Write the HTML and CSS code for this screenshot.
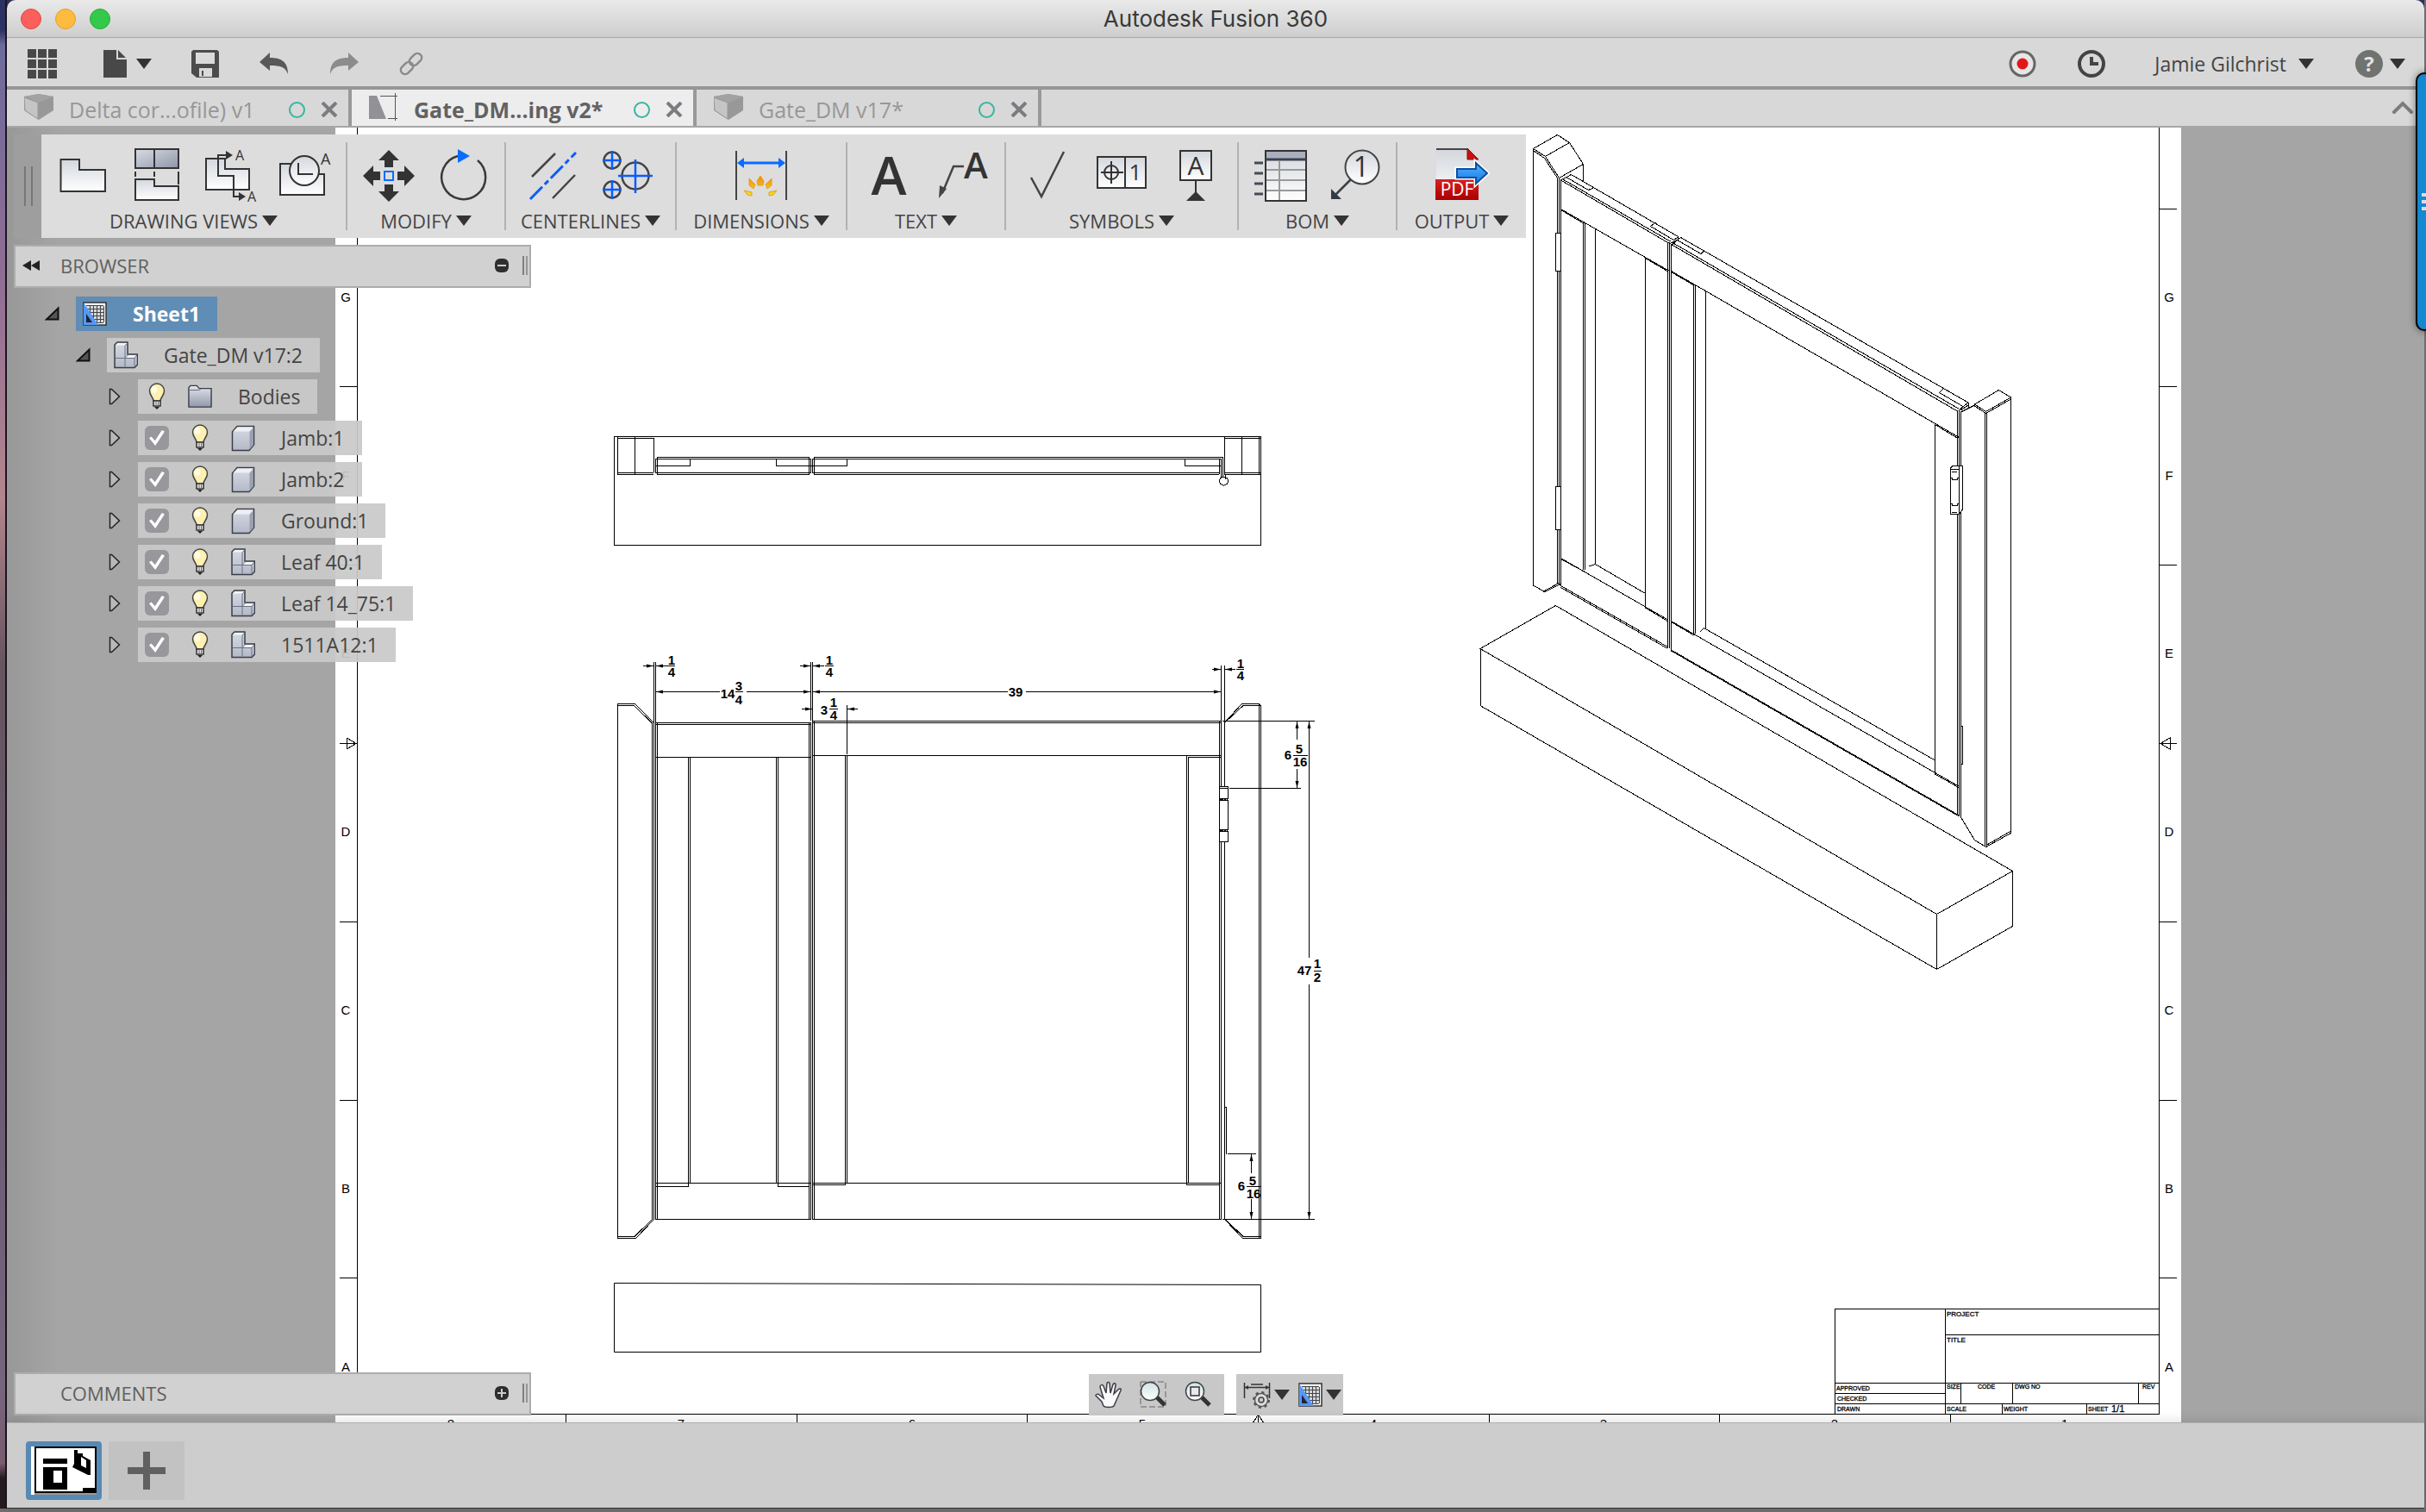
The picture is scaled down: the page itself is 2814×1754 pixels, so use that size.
FILE: index.html
```html
<!DOCTYPE html>
<html lang="en">
<head>
<meta charset="utf-8">
<title>Autodesk Fusion 360</title>
<link rel="stylesheet" href="styles.css">
</head>
<body>
<svg class="defs" aria-hidden="true">
  <defs>
    <linearGradient id="gPaper" x1="0" y1="0" x2="0" y2="1"><stop offset="0" stop-color="#d3d7dd"/><stop offset="1" stop-color="#ffffff"/></linearGradient>
    <linearGradient id="gSteel" x1="0" y1="0" x2="1" y2="1"><stop offset="0" stop-color="#d9dce4"/><stop offset="1" stop-color="#8f95a8"/></linearGradient>
    <linearGradient id="gBlock" x1="0" y1="0" x2="0" y2="1"><stop offset="0" stop-color="#d6dbe4"/><stop offset="1" stop-color="#b4b9c8"/></linearGradient>
    <linearGradient id="gFolder" x1="0" y1="0" x2="0" y2="1"><stop offset="0" stop-color="#e2e6ee"/><stop offset="1" stop-color="#9298ac"/></linearGradient>
    <linearGradient id="gBlue" x1="0" y1="0" x2="0" y2="1"><stop offset="0" stop-color="#55b4ff"/><stop offset="1" stop-color="#1677e6"/></linearGradient>
    <linearGradient id="gRed" x1="0" y1="0" x2="0" y2="1"><stop offset="0" stop-color="#d92020"/><stop offset="1" stop-color="#a80000"/></linearGradient>
    <linearGradient id="gLens" x1="0" y1="0" x2="0" y2="1"><stop offset="0" stop-color="#cfe3e4"/><stop offset="1" stop-color="#ffffff"/></linearGradient>
    <linearGradient id="gFlame" x1="0" y1="0" x2="0" y2="1"><stop offset="0" stop-color="#f08a10"/><stop offset="1" stop-color="#f7e020"/></linearGradient>
    <symbol id="caret" viewBox="0 0 18 12"><path d="M0 0H18L9 12Z" fill="#333"/></symbol>
    <symbol id="tabcube" viewBox="0 0 34 32"><path d="M0 4 17 1 34 4V20L17 31 0 20Z" fill="#989898"/><path d="M0 5 16 11V30L1 20Z" fill="#c3c6c4" stroke="#999"/><path d="M0 4 17 1 34 4 17 11Z" fill="#a2a2a2"/></symbol>
    <symbol id="bulb" viewBox="0 0 28 32"><path d="M10 21C10 17 5.500 15 5.500 9.500A8.500 8.500 0 0 1 22.500 9.500C22.500 15 18 17 18 21Z" fill="#fdf0b0" stroke="#444" stroke-width="1.500"/><ellipse cx="11" cy="8" rx="3.500" ry="4" fill="#fffce8"/><path d="M10 21H18V27H10Z" fill="#e8e8e8" stroke="#333" stroke-width="1.500"/><path d="M13 21V27M15.500 21V27" stroke="#666"/><path d="M11 28H17L14 31Z" fill="#222"/></symbol>
    <symbol id="cube" viewBox="0 0 28 32"><path d="M1.500 9 7 2.500H26.500V24L21 30.500H1.500Z" fill="url(#gBlock)" stroke="#3a3e48" stroke-width="1.500"/><path d="M2.500 8.500 7.500 3.500H25.500L21 8.500Z" fill="#eef0f4"/><path d="M21.500 9 26 4V24L21.500 29.500Z" fill="#9aa0b2"/></symbol>
    <symbol id="comp" viewBox="0 0 28 32"><path d="M1 4 4 1H16V15H27.500V27L24 30.500H1Z" fill="url(#gBlock)" stroke="#3a3e48" stroke-width="1.500"/><path d="M2 19.500H13V29.500M13 19.500V5L16 2M13 19.500 17 15.500M24 19.500 27 16M13 19.500H24V29.500" fill="none" stroke="#6c7282"/><path d="M2 4.500 4.500 2H15L12.500 4.500ZM14 19 17 16H26L23.500 19Z" fill="#f2f4f7"/></symbol>
    <symbol id="sheet" viewBox="0 0 28 28"><path d="M1 1H27V27H1Z" fill="#fff" stroke="#333" stroke-width="1.500"/><path d="M4 5H24V24H4Z" fill="#d4d8e0"/><path d="M4 8.500H24M4 12.500H24M4 16.500H24M4 20.500H24M8.500 5V24M12.500 5V24M16.500 5V24M20.500 5V24M24.500 5V24M4 4.500H24M4 24.500H24" stroke="#444" fill="none"/><path d="M1 1 18 27H1Z" fill="#5598f6"/><path d="M4 14 11 24H4Z" fill="#223"/></symbol>
    <symbol id="open" viewBox="0 0 18 18"><path d="M15.500 2.500V15.500H2Z" fill="#555" stroke="#111" stroke-width="2"/></symbol>
    <symbol id="closed" viewBox="0 0 14 20"><path d="M1.500 1.500H3.500L12.500 10 3.500 18.500H1.500Z" fill="#b8b8b8" stroke="#222" stroke-width="1.500"/></symbol>
    <marker id="arr" viewBox="0 0 8 6" refX="8" refY="3" markerWidth="8" markerHeight="6" markerUnits="userSpaceOnUse" orient="auto-start-reverse"><path d="M8 3 0 1V5Z" fill="#000"/></marker>
  </defs>
</svg>

<div class="backdrop"></div>
<div class="window">
  <header class="titlebar">
    <div class="lights"><button class="light red" aria-label="Close"></button><button class="light amber" aria-label="Minimise"></button><button class="light green" aria-label="Zoom"></button></div>
    <h1>Autodesk Fusion 360</h1>
    <span></span>
  </header>

  <div class="quickbar">
    <button aria-label="Data panel"><svg width="34" height="34" viewBox="0 0 34 34"><path fill="#484848" d="M0 0H10V10H0ZM12 0H22V10H12ZM24 0H34V10H24ZM0 12H10V22H0ZM12 12H22V22H12ZM24 12H34V22H24ZM0 24H10V34H0ZM12 24H22V34H12ZM24 24H34V34H24Z"/></svg></button>
    <button class="with-caret q-file" aria-label="File"><svg width="27" height="32" viewBox="0 0 27 32"><path d="M0 0H15V11H27V32H0ZM17 0 26 9H17Z" fill="#484848"/></svg><svg width="18" height="12"><use href="#caret"/></svg></button>
    <button class="q-save" aria-label="Save"><svg width="32" height="32" viewBox="0 0 32 32"><path d="M2 0H30L32 2V32H6L0 27V2Z" fill="#4c4c4c"/><path d="M5 3H27V16H5ZM9 21H24V31H9Z" fill="#dadada"/><path d="M12 24H14V30H12Z" fill="#4c4c4c"/></svg></button>
    <button class="q-undo" aria-label="Undo"><svg width="34" height="26" viewBox="0 0 34 26"><path d="M0 11 12 0V6C25 6 33 10 33 25C30 17 25 15 12 15V21Z" fill="#585858"/></svg></button>
    <button class="q-undo" aria-label="Redo"><svg width="34" height="26" viewBox="0 0 34 26"><path d="M34 11 22 0V6C9 6 1 10 1 25C4 17 9 15 22 15V21Z" fill="#8c8c8c"/></svg></button>
    <button class="q-undo" aria-label="Link"><svg width="28" height="28" viewBox="0 0 28 28"><g fill="none" stroke="#8a8a8a" stroke-width="2.500"><rect x="-8" y="-5" width="16" height="10" rx="5" transform="translate(19 9) rotate(-45)"/><rect x="-8" y="-5" width="16" height="10" rx="5" transform="translate(9 19) rotate(-45)"/></g></svg></button>
    <span class="push"></span>
    <button aria-label="Record"><svg width="32" height="32" viewBox="0 0 32 32"><circle cx="16" cy="16" r="14" fill="#e6e6e6" stroke="#666" stroke-width="3"/><circle cx="16" cy="16" r="6.500" fill="#e01818"/></svg></button>
    <button class="q-clock" aria-label="Job status"><svg width="32" height="32" viewBox="0 0 32 32"><circle cx="16" cy="16" r="14" fill="none" stroke="#444" stroke-width="4"/><path d="M16 8V16H24" fill="none" stroke="#444" stroke-width="4"/></svg></button>
    <button class="user q-user">Jamie Gilchrist<svg width="18" height="12"><use href="#caret"/></svg></button>
    <button class="with-help q-help" aria-label="Help"><span class="help">?</span><svg width="18" height="12"><use href="#caret"/></svg></button>
  </div>

  <nav class="tabs">
    <div class="tab"><svg width="34" height="32"><use href="#tabcube"/></svg><a href="#">Delta cor...ofile) v1</a><i></i><button aria-label="Close tab"><svg width="20" height="18" viewBox="0 0 20 18"><path d="M2 1 18 17M18 1 2 17" stroke="#7b7b80" stroke-width="4"/></svg></button></div>
    <div class="tab active"><svg width="34" height="32" viewBox="0 0 34 32"><path d="M0 3H9L20 30H0Z" fill="#919196"/><path d="M13 3.500H33M22 29.500H33M30.500 0V32" stroke="#555" fill="none"/></svg><a href="#">Gate_DM...ing v2*</a><i></i><button aria-label="Close tab"><svg width="20" height="18" viewBox="0 0 20 18"><path d="M2 1 18 17M18 1 2 17" stroke="#7b7b80" stroke-width="4"/></svg></button></div>
    <div class="tab"><svg width="34" height="32"><use href="#tabcube"/></svg><a href="#">Gate_DM v17*</a><i></i><button aria-label="Close tab"><svg width="20" height="18" viewBox="0 0 20 18"><path d="M2 1 18 17M18 1 2 17" stroke="#7b7b80" stroke-width="4"/></svg></button></div>
    <button class="fold" aria-label="Collapse"><svg width="26" height="16" viewBox="0 0 26 16"><path d="M3 13 13 3 23 13" fill="none" stroke="#7b7b80" stroke-width="4" stroke-linecap="round"/></svg></button>
  </nav>

  <main class="workspace">
    <svg class="drawing" viewBox="8 148 2804 1502">
      <path d="M389 148H2530V1650H389Z" fill="#fff"/>
      <!-- sheet frame and zone marks -->
      <g class="ln">
        <path d="M414.500 148V1640.500H2504.500V148"/>
        <path d="M394 448.500H414M394 655.500H414M394 1069.500H414M394 1276.500H414M394 1482.500H414"/>
        <path d="M2504 242.500H2525M2504 448.500H2525M2504 655.500H2525M2504 1069.500H2525M2504 1276.500H2525M2504 1482.500H2525"/>
        <path d="M656.500 1640V1650M924.500 1640V1650M1191.500 1640V1650M1727.500 1640V1650M1994.500 1640V1650M2262.500 1640V1650"/>
        <path d="M394 862.500H414M402 856 413 862.500 402 869ZM2504 862.500H2525M2517 856 2506 862.500 2517 869ZM1459.500 1640V1650M1453 1651 1459.500 1641 1466 1651"/>
      </g>
      <g class="zone">
        <text x="401" y="350">G</text><text x="401" y="557">F</text><text x="401" y="763">E</text><text x="401" y="970">D</text><text x="401" y="1177">C</text><text x="401" y="1384">B</text><text x="401" y="1591">A</text>
        <text x="2516" y="350">G</text><text x="2516" y="557">F</text><text x="2516" y="763">E</text><text x="2516" y="970">D</text><text x="2516" y="1177">C</text><text x="2516" y="1384">B</text><text x="2516" y="1591">A</text>
        <text x="523" y="1657">8</text><text x="790" y="1657">7</text><text x="1058" y="1657">6</text><text x="1325" y="1657">5</text><text x="1593" y="1657">4</text><text x="1860" y="1657">3</text><text x="2128" y="1657">2</text><text x="2395" y="1657">1</text>
      </g>
      <!-- plan view -->
      <g class="ln">
        <path d="M712.500 506.500H1462.500V632.500H712.500Z"/>
        <path d="M716.500 506V550.500H758M736.500 506V550M758.500 508V548M716 508.500H758M716 548.500H758"/>
        <path d="M760.500 532V549M762.500 530.500H939M761 532.500H940M760 548.500H940M762 550.500H939M762.500 530V550M938.500 530V550M940.500 532V549M760 540.500H800.500V532M900.500 532V540.500H982.500V532"/>
        <path d="M942.500 532V549M944.500 530V550M944 530.500H1418M943 532.500H1416M943 548.500H1414M944 550.500H1414M1374.500 532V540.500H1416M1414.500 532V550M1416.500 532V554M1418.500 530V554M1421.500 550V556"/>
        <circle cx="1419.500" cy="558" r="5"/>
        <path d="M1420.500 506V550.500H1462M1440.500 506V550M1460.500 506V550M1420 508.500H1462M1420 548.500H1462"/>
      </g>
      <!-- front elevation -->
      <g class="ln">
        <path d="M716.500 1436.500V816.500H736.500L758.500 838.500V1414.500L737.500 1436.500ZM716 818.500H735.500L756.500 839V1414.500L736 1434.500H716"/>
        <path d="M760.500 838V1414.500H940.500V838.500H760M760 840.500H940M762.500 838V1414M938.500 838V1414M760 878.500H940M798.500 878V1376.500H760M800.500 878V1372M900.500 878V1372M902.500 878V1376.500H938M760 1372.500H940"/>
        <path d="M942.500 836.500H1416.500V1414.500H942.500ZM942 838.500H1416M944.500 836V1414M1414.500 836V1414M942 876.500H1416M980.500 876V1374.500H942M982.500 876V1372M942 1372.500H1416M1376.500 876V1374.500H1414M1378.500 1372V878.500H1416"/>
        <path d="M1420.500 1414.500V838L1440.500 816.500H1460.500L1462.500 818.500V1436.500H1441.500L1420.500 1414.500M1421 838 1442 818.500H1462M1460.500 817V1436M1421 1414 1442 1434.500H1462"/>
        <path d="M1422.500 1284.500V1338.500M1420 1284.500H1423"/>
        <path class="solid" d="M1414.500 912.500H1424.500V926.500H1414.500ZM1414.500 928.500H1424.500V962.500H1414.500ZM1414.500 964.500H1424.500V976.500H1414.500ZM1414 914.500H1424"/>
        <path stroke-dasharray="2 1" d="M1414 927.500H1424M1414 963.500H1424"/>
      </g>
      <path class="ln soft" d="M712.500 1488.500 1462.500 1490.500V1568.500H712.500Z"/>
      <!-- dimensions -->
      <g class="ln">
        <path d="M758.500 768V838M760.500 768V838M940.500 768V836M942.500 768V836M1416.500 772V836M1420.500 772V836M982.500 818V875M1418 836.500H1525M1426 914.500H1509M1418 1414.500H1525M1424 1338.500H1457"/>
        <g marker-end="url(#arr)"><path d="M746 772.500H758"/><path d="M774 772.500H761"/><path d="M928 772.500H940"/><path d="M956 772.500H943"/><path d="M1406 776.500H1416"/><path d="M1433 776.500H1421"/><path d="M835 802.500H761"/><path d="M866 802.500H940"/><path d="M1169 802.500H943"/><path d="M1190 802.500H1416"/><path d="M930 822.500H942"/><path d="M995 822.500H983"/><path d="M1504.500 858V837"/><path d="M1504.500 892V914"/><path d="M1518.500 1111V837"/><path d="M1518.500 1142V1414"/><path d="M1451.500 1361V1339"/><path d="M1451.500 1391V1414"/></g>
        <path d="M774 772.500H783M957 772.500H967M1434 776.500H1443M853 802.500H862M962 822.500H972M1500 876.500H1517M1524 1126.500H1533M1446 1376.500H1462"/>
      </g>
      <g class="dim">
        <text x="779" y="771">1</text><text x="779" y="785">4</text>
        <text x="962" y="771">1</text><text x="962" y="785">4</text>
        <text x="1439" y="775">1</text><text x="1439" y="789">4</text>
        <text x="844" y="810">14</text><text x="857" y="801">3</text><text x="857" y="817">4</text>
        <text x="1178" y="808">39</text>
        <text x="956" y="829">3</text><text x="967" y="820">1</text><text x="967" y="835">4</text>
        <text x="1494" y="881">6</text><text x="1507" y="874">5</text><text x="1508" y="889">16</text>
        <text x="1513" y="1131">47</text><text x="1528" y="1123">1</text><text x="1528" y="1139">2</text>
        <text x="1440" y="1381">6</text><text x="1453" y="1375">5</text><text x="1454" y="1390">16</text>
      </g>
      <!-- isometric view -->
      <g class="ln">
        <path d="M1717 752.500 1804.500 702.500 2334.500 1010.500 2246.500 1060.500ZM1717 752.500V818.500L2246.500 1124.500V1060.500M2246.500 1124.500 2334.500 1074.500V1010.500"/>
        <path d="M1778.500 679V172.500L1806.500 156.500 1820.500 165.500 1836.500 190.500V211M1778.500 172.500 1792.500 181.500 1820.500 165.500M1792.500 181.500 1808.500 206.500 1836.500 190.500M1778.500 174.500 1791.500 183.500 1806.500 206.500M1778.500 679 1791.500 686.500 1810.500 677.500M1791.500 685.500 1809 676"/>
        <path d="M1806.500 206V678M1808.500 206V678M1810.500 209V680"/>
        <path class="solid" d="M1804.500 270.500H1810.500V314.500H1804.500ZM1804.500 564.500H1810.500V614.500H1804.500Z"/>
        <path d="M1810.500 209 1935.500 282M1812 207.500 1937.500 280M1810.500 209 1822.500 202.500 1946.500 274.500V278L1936 283M1817.500 206 1842.500 220.500 1848 218M1920.500 258 1914.500 262.500 1941.500 278.500 1946 275"/>
        <path d="M1810.500 242.500 1935.500 314M1836.500 258V661M1838.500 258V661M1850.500 265V655M1908.500 298V704M1908.500 299.500 1935 315M1810.500 243.500 1836 258.500"/>
        <path d="M1810.500 647.500 1935.500 719.500M1810.500 648.500 1836.500 662.500M1908.500 705 1935 721M1843 657 1850.500 654.500 1908.500 688.500M1810.500 679.500 1934.500 750.500M1810.500 681.500 1934.500 752.500"/>
        <path d="M1934.500 281V752M1936.500 281V752M1938.500 283V754"/>
        <path d="M1938.500 283.500 2270.500 477M1940 281.500 2272.500 474.500M1939 284.500 1945 278.500 1949.500 275.500 2283 467 2284 473 2274 478M2283 467 2272 476M2283 470 2274 476M1945.500 278.500 1973 294.500 1976.500 291M2254.500 450.500 2249.500 455.500 2279.500 473"/>
        <path d="M1938.500 314.500 2272.500 507.500M1938.500 315.500 1965 331M2244.500 492.500 2271 508.500M1964.500 330V736M1966.500 331V735M1978.500 338V729M2244.500 491V898"/>
        <path d="M1938.500 720.500 2272.500 912.500M1938.500 721.500 1965 737M2244.500 898 2272 913.500M1972 733 1976.500 728.500 2244.500 882M1938.500 754 2272.500 946M1938.500 755 2272.500 947"/>
        <path d="M2270.500 476V946M2272.500 476V947M2274.500 478V948L2290.500 974.500 2303.500 982.500 2332.500 966.500V461L2318.500 452.500 2290.500 469 2303.500 477.500 2332.500 461M2290.500 471 2303.500 479.500 2332.500 463M2302.500 478V982M2304.500 478V982M2304 980.500 2332 964.500M2274.500 478 2290.500 470M2276.500 842V886.500H2274M2274 842.500H2276"/>
        <path class="solid" d="M2272.500 540.500H2276.500V591L2272.500 596ZM2262.500 543 2265 540.500H2272.500V596.500H2262.500ZM2263 544H2272M2264 547.500H2270M2262 554.500H2264.500V556.500H2270.500V554.500H2272M2262 584.500H2264.500V586.500H2270.500V584.500H2272M2264 594.500H2270"/>
      </g>
      <!-- title block -->
      <g class="ln">
        <path d="M2128.500 1640V1518.500H2504M2256.500 1518V1640M2256 1548.500H2504M2128 1604.500H2504M2128 1616.500H2256M2128 1628.500H2504M2274.500 1604V1628M2334.500 1604V1628M2480.500 1604V1628M2322.500 1628V1640M2420.500 1628V1640"/>
      </g>
      <g class="tb">
        <text class="tb-lg" x="2258" y="1527">PROJECT</text><text class="tb-lg" x="2258" y="1557">TITLE</text>
        <text x="2130" y="1613">APPROVED</text><text x="2131" y="1625">CHECKED</text><text x="2131" y="1637">DRAWN</text>
        <text x="2258" y="1611">SIZE</text><text x="2294" y="1611">CODE</text><text x="2337" y="1611">DWG  NO</text><text x="2485" y="1611">REV</text>
        <text x="2258" y="1637">SCALE</text><text x="2324" y="1637">WEIGHT</text><text x="2422" y="1637">SHEET</text><text class="tb-xl" x="2449" y="1638">1/1</text>
      </g>
    </svg>

    <div class="overlay">
      <div class="ribbon">
        <span class="grip"></span>
        <section>
          <div class="tools">
            <button aria-label="Base view"><svg width="64" height="64" viewBox="0 0 64 64"><path d="M6.500 13H28V25H58V50H6.500Z" fill="url(#gPaper)" stroke="#333" stroke-width="2"/></svg></button>
            <button aria-label="Projected view"><svg width="64" height="64" viewBox="0 0 64 64"><path d="M7 1H57V23H7Z" fill="url(#gSteel)" stroke="#333" stroke-width="2"/><path d="M29 1V23M7 27V33M29 27V33M57 27V42" stroke="#333" stroke-width="2"/><path d="M7 36H29V44H57V60H7Z" fill="url(#gPaper)" stroke="#333" stroke-width="2"/></svg></button>
            <button aria-label="Section view"><svg width="64" height="64" viewBox="0 0 64 64"><path d="M3 12H25V24H53V48H3Z" fill="url(#gPaper)" stroke="#333" stroke-width="2"/><path d="M17 33V8H27M17 32H35V56H42" fill="none" stroke="#333" stroke-width="2"/><path d="M26 3 34 8 26 13ZM41 51 49 56 41 61Z" fill="#333"/><text x="37" y="14" class="ico" font-size="16">A</text><text x="51" y="62" class="ico" font-size="16">A</text></svg></button>
            <button aria-label="Detail view"><svg width="64" height="64" viewBox="0 0 64 64"><path d="M3 18H24V30H54V54H3Z" fill="url(#gPaper)" stroke="#333" stroke-width="2"/><circle cx="31" cy="26" r="17" fill="url(#gPaper)" stroke="#333" stroke-width="2"/><path d="M24 17V30H41" fill="none" stroke="#333" stroke-width="2"/><text x="50" y="19" class="ico" font-size="18">A</text></svg></button>
          </div>
          <button class="menu">DRAWING VIEWS<svg width="18" height="12"><use href="#caret"/></svg></button>
        </section>
        <section>
          <div class="tools">
            <button aria-label="Move"><svg width="64" height="64" viewBox="0 0 64 64"><path d="M32 2 44 14H37V22H27V14H20ZM32 62 20 50H27V42H37V50H44ZM2 32 14 20V27H22V37H14V44ZM62 32 50 44V37H42V27H50V20Z" fill="#333"/><path d="M27 27H37V37H27Z" fill="none" stroke="#0a6cff" stroke-width="2"/></svg></button>
            <button aria-label="Rotate"><svg width="64" height="64" viewBox="0 0 64 64"><path d="M49 14A25.500 25.500 0 1 1 26 9" fill="none" stroke="#3a3a3a" stroke-width="2.500"/><path d="M26 1 40 9 26 17Z" fill="#0a6cff"/></svg></button>
          </div>
          <button class="menu">MODIFY<svg width="18" height="12"><use href="#caret"/></svg></button>
        </section>
        <section>
          <div class="tools">
            <button aria-label="Centerline"><svg width="64" height="64" viewBox="0 0 64 64"><path d="M7 33 34 6M31 58 57 31" stroke="#444" stroke-width="2.500"/><path d="M5 59 58 5" stroke="#0a5cff" stroke-width="3" stroke-dasharray="20 4 6 4"/></svg></button>
            <button aria-label="Center mark"><svg width="64" height="64" viewBox="0 0 64 64"><g fill="none" stroke="#444" stroke-width="2.500"><circle cx="14" cy="14" r="9.500"/><circle cx="14" cy="48" r="9.500"/><circle cx="41" cy="32" r="15.500"/></g><path d="M3 14H25M14 3V25M3 48H25M14 37V59M21 32H61M41 13V52" stroke="#0a5cff" stroke-width="2.500"/></svg></button>
          </div>
          <button class="menu">CENTERLINES<svg width="18" height="12"><use href="#caret"/></svg></button>
        </section>
        <section>
          <div class="tools">
            <button aria-label="Dimension"><svg width="64" height="64" viewBox="0 0 64 64"><path d="M3 3V60M61 3V60" stroke="#444" stroke-width="2"/><path d="M8 17H56" stroke="#0a6cff" stroke-width="3"/><path d="M4 17 12 11V23ZM60 17 52 11V23Z" fill="#0a6cff"/><path d="M31 32 35 38 34 43H28L27 38ZM18 35 25 42 23 47 18 43ZM44 35 37 42 39 47 44 43ZM12 49 21 51V55L16 54ZM50 49 41 51V55L46 54Z" fill="url(#gFlame)" stroke="#e8a020"/></svg></button>
          </div>
          <button class="menu">DIMENSIONS<svg width="18" height="12"><use href="#caret"/></svg></button>
        </section>
        <section>
          <div class="tools">
            <button aria-label="Text"><svg width="64" height="64" viewBox="0 0 64 64"><text x="32" y="54" text-anchor="middle" class="ico big" font-size="62">A</text></svg></button>
            <button aria-label="Leader"><svg width="64" height="64" viewBox="0 0 64 64"><path d="M33 21H21L8 52" fill="none" stroke="#444" stroke-width="2.500"/><path d="M4 58 5 43 13 47Z" fill="#444"/><text x="47" y="35" text-anchor="middle" class="ico big" font-size="42">A</text></svg></button>
          </div>
          <button class="menu">TEXT<svg width="18" height="12"><use href="#caret"/></svg></button>
        </section>
        <section>
          <div class="tools">
            <button aria-label="Surface texture"><svg width="64" height="64" viewBox="0 0 64 64"><path d="M13 34 25 56 51 4" fill="none" stroke="#444" stroke-width="2.500"/></svg></button>
            <button aria-label="Feature control frame"><svg width="64" height="64" viewBox="0 0 64 64"><path d="M4 10H60V46H4Z" fill="url(#gPaper)" stroke="#333" stroke-width="2"/><path d="M36 10V46M8 28H34M20 15V41" stroke="#333" stroke-width="2"/><circle cx="20" cy="28" r="8" fill="none" stroke="#333" stroke-width="2"/><text x="48" y="37" text-anchor="middle" class="ico" font-size="26">1</text></svg></button>
            <button aria-label="Datum identifier"><svg width="64" height="64" viewBox="0 0 64 64"><path d="M14 3H50V37H14Z" fill="url(#gPaper)" stroke="#333" stroke-width="2"/><path d="M32 37V52" stroke="#333" stroke-width="2"/><path d="M32 50 43 61H21Z" fill="#333"/><text x="32" y="31" text-anchor="middle" class="ico" font-size="30">A</text></svg></button>
          </div>
          <button class="menu">SYMBOLS<svg width="18" height="12"><use href="#caret"/></svg></button>
        </section>
        <section>
          <div class="tools">
            <button aria-label="Parts list"><svg width="64" height="64" viewBox="0 0 64 64"><path d="M15 3H62V61H15Z" fill="url(#gPaper)" stroke="#333" stroke-width="2"/><path d="M16 4H61V12H16Z" fill="#a9afbc"/><path d="M15 13H62" stroke="#3c4250" stroke-width="3"/><path d="M16 25H61M16 37H61M16 49H61M31 15V60" stroke="#9a9a9a" stroke-width="2"/><path d="M2 17H12M2 29H12M2 41H12M2 53H12" stroke="#444b55" stroke-width="3"/></svg></button>
            <button aria-label="Balloon"><svg width="64" height="64" viewBox="0 0 64 64"><circle cx="41" cy="22" r="19.500" fill="url(#gPaper)" stroke="#444" stroke-width="2"/><path d="M28 36 10 54" stroke="#3a4048" stroke-width="2.500"/><path d="M5 59V47L17 59Z" fill="#333a44"/><text x="40" y="33" text-anchor="middle" class="ico" font-size="32">1</text></svg></button>
          </div>
          <button class="menu">BOM<svg width="18" height="12"><use href="#caret"/></svg></button>
        </section>
        <section>
          <div class="tools">
            <button aria-label="Output PDF"><svg width="64" height="64" viewBox="0 0 64 64"><path d="M2 1H38L51 13V60H2Z" fill="url(#gPaper)"/><path d="M2 1H38" stroke="#444" stroke-width="2"/><path d="M38 0 51 13H38Z" fill="#c81010" stroke="#801010"/><path d="M1 36H51V60H1Z" fill="url(#gRed)"/><text x="26" y="55" text-anchor="middle" fill="#fff" font-family="Open Sans, sans-serif" font-size="21">PDF</text><path d="M26 24H48V17L61 29 48 41V34H26Z" fill="url(#gBlue)" stroke="#fff" stroke-width="5"/><path d="M26 24H48V17L61 29 48 41V34H26Z" fill="url(#gBlue)" stroke="#0b4fa0" stroke-width="2"/></svg></button>
          </div>
          <button class="menu">OUTPUT<svg width="18" height="12"><use href="#caret"/></svg></button>
        </section>
      </div>

      <aside class="browser">
        <div class="panel">
          <button class="rewind" aria-label="Collapse browser"><svg width="20" height="12" viewBox="0 0 20 12"><path d="M10 0V12L0 6ZM20 0V12L10 6Z" fill="#222"/></svg></button>
          <h2>BROWSER</h2>
          <button aria-label="Hide browser"><svg width="16" height="16" viewBox="0 0 16 16"><rect width="16" height="16" rx="6" fill="#2e2e2e"/><path d="M3 8H13" stroke="#ccc" stroke-width="2"/></svg></button>
          <span class="bars"></span>
        </div>
        <ul class="tree">
          <li><button class="exp" aria-label="Collapse"><svg width="18" height="18"><use href="#open"/></svg></button><a class="row sel" href="#"><svg width="28" height="28"><use href="#sheet"/></svg>Sheet1</a></li>
          <li class="l1"><button class="exp" aria-label="Collapse"><svg width="18" height="18"><use href="#open"/></svg></button><a class="row" href="#"><svg width="28" height="32"><use href="#comp"/></svg>Gate_DM v17:2</a></li>
          <li class="l2"><button class="exp" aria-label="Expand"><svg width="14" height="20"><use href="#closed"/></svg></button><a class="row" href="#"><svg width="28" height="32"><use href="#bulb"/></svg><svg width="28" height="30" viewBox="0 0 30 30"><path d="M1 4 3 1.500H11L14 5H29V28H1Z" fill="url(#gFolder)" stroke="#3a3e48" stroke-width="1.500"/><path d="M2 7H14L16 5.500" fill="none" stroke="#666"/></svg>Bodies</a></li>
          <li class="l2"><button class="exp" aria-label="Expand"><svg width="14" height="20"><use href="#closed"/></svg></button><label class="row"><input type="checkbox" checked><svg width="28" height="32"><use href="#bulb"/></svg><svg width="28" height="32"><use href="#cube"/></svg>Jamb:1</label></li>
          <li class="l2"><button class="exp" aria-label="Expand"><svg width="14" height="20"><use href="#closed"/></svg></button><label class="row"><input type="checkbox" checked><svg width="28" height="32"><use href="#bulb"/></svg><svg width="28" height="32"><use href="#cube"/></svg>Jamb:2</label></li>
          <li class="l2"><button class="exp" aria-label="Expand"><svg width="14" height="20"><use href="#closed"/></svg></button><label class="row"><input type="checkbox" checked><svg width="28" height="32"><use href="#bulb"/></svg><svg width="28" height="32"><use href="#cube"/></svg>Ground:1</label></li>
          <li class="l2"><button class="exp" aria-label="Expand"><svg width="14" height="20"><use href="#closed"/></svg></button><label class="row"><input type="checkbox" checked><svg width="28" height="32"><use href="#bulb"/></svg><svg width="28" height="32"><use href="#comp"/></svg>Leaf 40:1</label></li>
          <li class="l2"><button class="exp" aria-label="Expand"><svg width="14" height="20"><use href="#closed"/></svg></button><label class="row"><input type="checkbox" checked><svg width="28" height="32"><use href="#bulb"/></svg><svg width="28" height="32"><use href="#comp"/></svg>Leaf 14_75:1</label></li>
          <li class="l2"><button class="exp" aria-label="Expand"><svg width="14" height="20"><use href="#closed"/></svg></button><label class="row"><input type="checkbox" checked><svg width="28" height="32"><use href="#bulb"/></svg><svg width="28" height="32"><use href="#comp"/></svg>1511A12:1</label></li>
        </ul>
      </aside>

      <div class="foot">
        <div class="panel">
          <span class="rewind"></span>
          <h2>COMMENTS</h2>
          <button aria-label="Show comments"><svg width="16" height="16" viewBox="0 0 16 16"><rect width="16" height="16" rx="6" fill="#2e2e2e"/><path d="M3 8H13M8 3V13" stroke="#ccc" stroke-width="2"/></svg></button>
          <span class="bars"></span>
        </div>
        <div class="navbar">
          <div class="navgroup views">
            <button aria-label="Pan"><svg width="32" height="32" viewBox="0 0 32 32"><path d="M10 29 8 24 1 17C1 15 4 15 5 16L10 20 6 7C6 4 9 4 10 6L13 14 14 3C14 1 17 1 17 3L18 14 21 4C22 2 25 3 24 5L22 15 27 10C29 8 31 9 30 11L26 20 22 29C20 31 12 31 10 29Z" fill="#fafafa" stroke="#3c3c44" stroke-width="1.500"/></svg></button>
            <button aria-label="Zoom window"><svg width="32" height="32" viewBox="0 0 32 32"><path d="M1 1H30V30H1Z" fill="none" stroke="#666" stroke-dasharray="7 3"/><path d="M20 19 29 28" stroke="#333" stroke-width="5"/><circle cx="12" cy="12" r="10.500" fill="url(#gLens)" stroke="#444" stroke-width="1.500"/></svg></button>
            <button aria-label="Fit"><svg width="32" height="32" viewBox="0 0 32 32"><path d="M20 19 29 28" stroke="#333" stroke-width="5"/><circle cx="12" cy="12" r="10.500" fill="url(#gLens)" stroke="#444" stroke-width="1.500"/><path d="M7 7H17V17H7Z" fill="#e8e8ee" stroke="#333" stroke-width="1.500"/></svg></button>
          </div>
          <div class="navgroup">
            <button class="with-menu" aria-label="Annotation settings"><svg width="32" height="32" viewBox="0 0 32 32"><path d="M1.500 2V20M30.500 2V20M2 7.500H30M9 4H23" stroke="#333" stroke-width="1.500"/><path d="M2 7.500 6 5V10ZM30 7.500 26 5V10Z" fill="#333"/><circle cx="21" cy="22" r="7.500" fill="#ddd" stroke="#555" stroke-width="1.500"/><circle cx="21" cy="22" r="8.500" fill="none" stroke="#555" stroke-width="3" stroke-dasharray="3 3.670"/><circle cx="21" cy="22" r="6.500" fill="#ddd"/><circle cx="21" cy="22" r="3" fill="#c8c8c8" stroke="#444" stroke-width="1.500"/></svg><svg width="18" height="12"><use href="#caret"/></svg></button>
            <button class="with-menu" aria-label="Sheet settings"><svg width="28" height="28"><use href="#sheet"/></svg><svg width="18" height="12"><use href="#caret"/></svg></button>
          </div>
        </div>
      </div>
    </div>
  </main>

  <footer class="sheets">
    <button class="thumb" aria-label="Sheet1"><svg width="76" height="56" viewBox="0 0 76 56"><path fill="#fff" d="M0 0H76V56H0Z"/><path d="M5 1H75V53H5Z" fill="none" stroke="#000" stroke-width="2"/><path fill="#999" d="M4 54H76V56H4Z"/><path fill-rule="evenodd" d="M14 14H42V20H14ZM14 24H42V50H14ZM26 28H36V42H26ZM50 4H54V8H60V11L69 16V33H66L48 24 50 20ZM58 12V22L64 25V16ZM60 48H75V53H60Z"/></svg></button>
    <button class="add" aria-label="Add sheet"><svg width="44" height="44" viewBox="0 0 44 44"><path d="M18 0H26V18H44V26H26V44H18V26H0V18H18Z" fill="#606060"/></svg></button>
  </footer>
</div>
<div class="dock"><span></span><span></span><span></span></div>
</body>
</html>
```
FILE: styles.css
```css
* { box-sizing: border-box; }
body {
  margin: 0;
  height: 100vh;
  padding: 0 2px 4px 0;
  display: grid;
  grid-template-columns: 8px 1fr;
  grid-template-rows: 100%;
  overflow: hidden;
  background: #6e6e6e;
  color: #444;
  font-family: "Open Sans", "Noto Sans", sans-serif;
  font-size: 23px;
  line-height: 32px;
}
button {
  display: inline-flex;
  align-items: center;
  justify-content: center;
  margin: 0;
  padding: 0;
  border: 0;
  background: none;
  color: inherit;
  font: inherit;
}
svg { display: block; flex: none; }
a { color: inherit; text-decoration: none; }
h1, h2 { margin: 0; font-weight: 400; }
.defs { position: absolute; width: 0; height: 0; }

.backdrop {
  border-right: 2px solid #1c1420;
  background: linear-gradient(#2b3160 2%, #6d6b9c 3%, #8f6d94 18%, #b3858d 33%, #66555f 44%, #6b5a72 70%, #75657d 92%, #7d5e72 97%, #251c20 98%);
}
.window {
  display: flex;
  flex-direction: column;
  min-width: 0;
  border-bottom: 1px solid #333;
  background: #2b3160;
}

.titlebar {
  display: grid;
  grid-template-columns: 1fr auto 1fr;
  align-items: center;
  height: 44px;
  padding-top: 1px;
  border-bottom: 1px solid #a6a6a6;
  border-radius: 10px 10px 0 0;
  background: linear-gradient(#e9e9e9, #cecece);
}
.titlebar h1 {
  color: #3a3a3a;
  font-family: Inter, "Liberation Sans", sans-serif;
  font-size: 26px;
}
.lights { display: flex; gap: 16px; padding-left: 16px; }
.light { width: 24px; height: 24px; border-radius: 50%; }
.red { background: #fc605c; border: 1px solid #e2463f; }
.amber { background: #fdbc40; border: 1px solid #e0a028; }
.green { background: #34c94a; border: 1px solid #24ab35; }

.quickbar {
  display: flex;
  align-items: center;
  height: 60px;
  padding: 4px 22px 0 24px;
  border-bottom: 4px solid #969696;
  background: #d8d8d8;
}
.with-caret { gap: 11px; }
.q-file { margin-left: 54px; }
.q-save { margin-left: 46px; }
.q-undo { margin-left: 47px; }
.push { flex: 1; }
.q-clock { margin-left: 48px; }
.user { gap: 14px; }
.q-user { margin-left: 57px; }
.with-help { gap: 8px; }
.q-help { margin-left: 48px; }
.help {
  width: 32px;
  height: 32px;
  border-radius: 50%;
  background: #707370;
  color: #e4e4e4;
  font-weight: 700;
  font-size: 24px;
}

.tabs {
  display: flex;
  height: 44px;
  border-bottom: 2px solid #a6a6a6;
  background: #d8d8d8;
}
.tab {
  display: flex;
  align-items: center;
  width: 400px;
  padding: 0 12px 0 20px;
  border-right: 4px solid #999;
  color: #979797;
  font-size: 25px;
}
.tab svg { margin-top: -2px; }
.tab a { flex: 1; padding: 4px 0 0 18px; white-space: nowrap; }
.tab i { width: 19px; height: 19px; margin: 4px 18px 0 0; border: 2px solid #3ab59f; border-radius: 50%; }
.tab button { margin-top: 6px; }
.tab.active { background: #ededed; color: #626262; font-weight: 700; }
.fold { margin: 0 12px 0 auto; }

.workspace {
  position: relative;
  flex: 1;
  min-height: 0;
  overflow: hidden;
  background: linear-gradient(90deg, #989898, #a5a5a5 60px);
}
.drawing { position: absolute; inset: 0; width: 100%; height: 100%; }
.ln { fill: none; stroke: #000; stroke-width: 1; shape-rendering: crispEdges; }
.soft { shape-rendering: auto; }
.solid { fill: #fff; }
.zone, .dim { font-family: "Liberation Sans", Arial, sans-serif; font-size: 15px; text-anchor: middle; fill: #000; }
.dim { font-weight: 700; }
.tb { font-family: "Liberation Sans", Arial, sans-serif; font-size: 7px; fill: #000; stroke: #000; stroke-width: .3; }
.tb-lg { font-size: 8px; }
.tb-xl { font-size: 11px; }
.ico { font-family: "Open Sans", sans-serif; fill: #333; }
.big { font-weight: 600; }

.overlay {
  position: relative;
  display: flex;
  flex-direction: column;
  height: 100%;
  padding: 8px;
}
.ribbon {
  display: grid;
  grid-template-columns: 32px 355px 184px 198px 198px 184px 270px 184px 149px;
  align-self: flex-start;
  height: 120px;
  background: #ddd;
}
.grip {
  background: linear-gradient(90deg, transparent 12px, #777 12px 14px, transparent 14px 20px, #777 20px 22px, transparent 22px) center / 100% 46px no-repeat #9e9e9e;
}
.ribbon section {
  display: flex;
  flex-direction: column;
  align-items: center;
  padding: 16px 2px 0 0;
  background: linear-gradient(#b2b2b2, #b2b2b2) right center / 2px 102px no-repeat;
}
.ribbon section:last-child { padding-right: 0; background: none; }
.tools { display: flex; gap: 22px; }
.menu { gap: 5px; margin-top: 4px; font-size: 22px; white-space: nowrap; }

.browser { margin-top: 8px; }
.panel {
  display: flex;
  align-items: center;
  width: 600px;
  height: 50px;
  padding: 0 2px 2px 8px;
  border: 2px solid #adadad;
  background: #d1d1d1;
  color: #606060;
}
.panel h2 { flex: 1; font-size: 22px; }
.rewind { width: 20px; margin-right: 24px; }
.bars { width: 6px; height: 22px; margin-left: 16px; border-left: 2px solid #808080; border-right: 2px solid #959595; }

.tree { margin: 10px 0 0; padding: 0; list-style: none; }
.tree li { display: flex; align-items: center; height: 40px; margin-bottom: 8px; padding-left: 36px; }
.tree .l1 { padding-left: 72px; }
.tree .l2 { padding-left: 108px; }
.exp { width: 18px; margin-right: 18px; }
.row {
  display: flex;
  align-items: center;
  gap: 22px;
  height: 40px;
  padding: 0 20px 0 8px;
  background: rgba(201, 201, 201, .93);
}
.row svg:last-of-type { margin-right: 8px; }
.row.sel { background: #608db5; color: #fff; font-weight: 700; }
.row input {
  appearance: none;
  display: grid;
  place-items: center;
  width: 28px;
  height: 28px;
  margin: 0;
  border-radius: 6px;
  background: #97979c;
}
.row input::after {
  content: "";
  width: 18px;
  height: 18px;
  background: #fff;
  clip-path: polygon(0 52%, 14% 42%, 38% 68%, 82% 0, 100% 8%, 40% 100%);
}

.foot { display: grid; grid-template-columns: 1fr auto 1fr; align-items: end; margin-top: auto; }
.navbar { display: flex; gap: 14px; }
.navgroup { display: flex; align-items: center; gap: 10px; height: 48px; padding: 0 2px 0 8px; background: #c8c8c8; }
.views { gap: 20px; padding: 0 14px 0 7px; }
.with-menu { gap: 4px; }

.sheets {
  position: relative;
  display: flex;
  gap: 8px;
  height: 99px;
  padding: 21px 22px 0;
  border-top: 1px solid #b0b0b0;
  background: #cdcdcd;
  box-shadow: 0 -2px 12px rgba(0, 0, 0, .12);
}
.thumb, .add { width: 88px; height: 68px; }
.thumb { border: 6px solid #5889b4; border-radius: 4px; }
.add { background: #c2c2c2; }

.dock {
  position: absolute;
  top: 84px;
  right: -8px;
  display: flex;
  flex-direction: column;
  justify-content: center;
  gap: 4px;
  width: 20px;
  height: 300px;
  padding-left: 5px;
  border: 2px solid #000;
  border-radius: 10px;
  background: #1488d0;
  box-shadow: 0 0 8px rgba(0, 0, 0, .5);
}
.dock span { height: 4px; background: #ddd; }
```
